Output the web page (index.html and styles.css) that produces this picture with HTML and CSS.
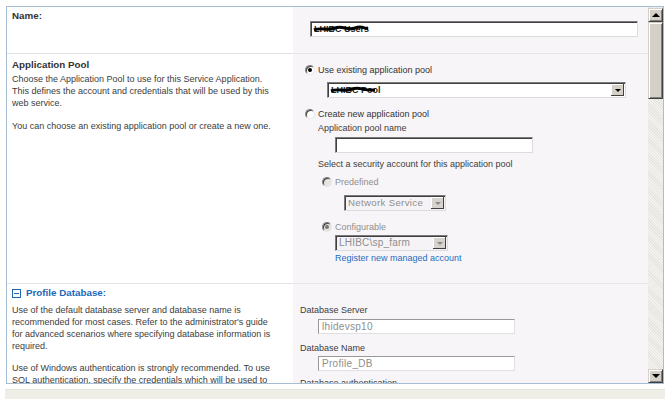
FILE: index.html
```html
<!DOCTYPE html>
<html>
<head>
<meta charset="utf-8">
<link rel="stylesheet" href="styles.css">
</head>
<body>
<div class="window">
  <div class="content">
    <div class="row row-name">
      <div class="left">
        <div class="title">Name:</div>
      </div>
      <div class="right">
        <div class="field field-name redacted">
          <span class="val">LHIBC Users</span>
          <svg class="scribble" width="56" height="8" viewBox="0 0 56 8"><path d="M1 5 C8 2 14 6 22 3 S34 6 42 3 S50 4 55 3" stroke="#000" stroke-width="3" fill="none"/></svg>
        </div>
      </div>
    </div>

    <div class="row row-pool">
      <div class="left">
        <div class="title">Application Pool</div>
        <p class="desc">Choose the Application Pool to use for this Service Application.<br>This defines the account and credentials that will be used by this<br>web service.</p>
        <p class="desc gap">You can choose an existing application pool or create a new one.</p>
      </div>
      <div class="right">
        <div class="opt opt-first"><span class="radio checked"></span><span>Use existing application pool</span></div>
        <div class="select select-pool redacted">
          <span class="val">LHIBC Pool</span>
          <svg class="scribble" width="46" height="8" viewBox="0 0 46 8"><path d="M1 5 C8 2 14 6 22 3 S32 5 45 4" stroke="#000" stroke-width="3" fill="none"/></svg>
          <span class="drop"><span class="tri"></span></span>
        </div>
        <div class="opt opt-second"><span class="radio"></span><span>Create new application pool</span></div>
        <div class="sub">
          <div class="lbl">Application pool name</div>
          <div class="field field-poolname"></div>
          <div class="lbl lbl-sec">Select a security account for this application pool</div>
          <div class="subsub">
            <div class="opt opt-dis opt-pre"><span class="radio dis"></span><span>Predefined</span></div>
            <div class="select select-dis select-net"><span class="val">Network Service</span><span class="drop"><span class="tri"></span></span></div>
            <div class="opt opt-dis opt-conf"><span class="radio dis checked"></span><span>Configurable</span></div>
          </div>
          <div class="select select-dis select-farm"><span class="val">LHIBC\sp_farm</span><span class="drop"><span class="tri"></span></span></div>
          <a class="link">Register new managed account</a>
        </div>
      </div>
    </div>

    <div class="row row-db">
      <div class="left">
        <div class="title title-db"><span class="minus"></span>Profile Database:</div>
        <p class="desc desc-db">Use of the default database server and database name is<br>recommended for most cases. Refer to the administrator's guide<br>for advanced scenarios where specifying database information is<br>required.</p>
        <p class="desc gap-db">Use of Windows authentication is strongly recommended. To use<br>SQL authentication, specify the credentials which will be used to<br>connect to the database.</p>
      </div>
      <div class="right">
        <div class="lbl lbl-server">Database Server</div>
        <div class="field field-db"><span class="val dim">lhidevsp10</span></div>
        <div class="lbl lbl-dbname">Database Name</div>
        <div class="field field-db field-db2"><span class="val dim">Profile_DB</span></div>
        <div class="lbl lbl-auth">Database authentication</div>
      </div>
    </div>
  </div>
  <div class="scrollbar">
    <div class="sbtn"><span class="up"></span></div>
    <div class="thumb"></div>
    <div class="track"></div>
    <div class="sbtn"><span class="down"></span></div>
  </div>
</div>
<div class="bottombar"></div>
</body>
</html>
```
FILE: styles.css
```css
html, body {
  margin: 0;
  padding: 0;
  background: #ffffff;
  font-family: "Liberation Sans", Arial, sans-serif;
  font-size: 9px;
  color: #333333;
}
.window {
  margin: 6px 0 0 6px;
  width: 656px;
  height: 376px;
  border: 1px solid #a7bdd3;
  display: flex;
  overflow: hidden;
}
.content {
  width: 641px;
  height: 376px;
  overflow: hidden;
}
.row {
  display: flex;
}
.row .left {
  width: 281px;
  padding-left: 5px;
  background: #ffffff;
  border-bottom: 1px solid #e4e2e4;
  white-space: nowrap;
}
.row .right {
  width: 355px;
  flex: 0 0 355px;
  background: #f8f5f8;
  border-bottom: 1px solid #e9e6e9;
  position: relative;
  white-space: nowrap;
}
.row-name { height: 47px; }
.row-pool { height: 230px; }
.row-db { height: 200px; }
.row-db .left, .row-db .right { border-bottom: none; }

.title {
  font-weight: bold;
  font-size: 9.8px;
  line-height: 14px;
  color: #333;
}
.row-name .title { margin-top: 2px; }
.row-pool .title { margin-top: 4px; }
.desc {
  margin: 1px 0 0 0;
  line-height: 12px;
  color: #3c3c3c;
}
.desc.gap { margin-top: 11px; }
.title-db {
  margin-top: 2px;
  color: #1b68b8;
  font-size: 9.8px;
  display: flex;
  align-items: center;
}
.minus {
  width: 7px;
  height: 7px;
  border: 1px solid #1b68b8;
  margin-right: 5px;
  position: relative;
}
.minus::after {
  content: "";
  position: absolute;
  left: 1px;
  right: 1px;
  top: 3px;
  height: 1px;
  background: #1b68b8;
}
.desc-db { margin-top: 4px; }
.gap-db { margin-top: 10px; }

/* fields */
.field, .select {
  background: #fff;
  border-top: 1px solid #7b7b7b;
  border-left: 1px solid #7b7b7b;
  border-right: 1px solid #dcdcdc;
  border-bottom: 1px solid #dcdcdc;
  box-shadow: inset 1px 1px 0 #404040;
  box-sizing: border-box;
  position: relative;
  display: flex;
  align-items: center;
  line-height: 12px;
}
.val {
  padding-left: 3px;
  white-space: nowrap;
}
.redacted .val { color: #222; font-weight: bold; }
.scribble {
  position: absolute;
  left: 2px;
  top: 3px;
}
.field-name {
  margin: 14px 0 0 17px;
  width: 328px;
  height: 16px;
}
.opt {
  display: flex;
  align-items: center;
  line-height: 14px;
  height: 14px;
}
.opt-first { margin: 9px 0 0 12px; }
.opt-second { margin: 9px 0 0 12px; }
.radio {
  width: 10px;
  height: 10px;
  border-radius: 50%;
  background: #fff;
  border: 1px solid;
  border-color: #808080 #e8e8e8 #e8e8e8 #808080;
  box-sizing: border-box;
  margin-right: 3px;
  position: relative;
  box-shadow: inset 1px 1px 0 #404040;
}
.radio.checked::after {
  content: "";
  position: absolute;
  width: 4px;
  height: 4px;
  border-radius: 50%;
  background: #000;
  left: 2px;
  top: 2px;
}
.radio.dis {
  background: #e6e4e0;
}
.radio.dis.checked::after { background: #777; }
.select-pool {
  margin: 5px 0 0 34px;
  width: 299px;
  height: 16px;
}
.drop {
  position: absolute;
  right: 1px;
  top: 1px;
  bottom: 1px;
  width: 13px;
  background: #d4d0c8;
  box-shadow: inset -1px -1px 0 #404040, inset 1px 1px 0 #ffffff;
  display: flex;
  align-items: center;
  justify-content: center;
}
.tri {
  width: 0;
  height: 0;
  border-left: 3px solid transparent;
  border-right: 3px solid transparent;
  border-top: 3px solid #000;
  margin-top: 1px;
}
.select-dis .tri { border-top-color: #8a8a8a; }
.select-dis .drop { background: #d6d3ce; }
.sub { margin-left: 25px; }
.lbl {
  line-height: 14px;
  height: 14px;
  color: #3c3c3c;
}
.field-poolname {
  margin: 2px 0 0 17px;
  width: 198px;
  height: 16px;
}
.lbl-sec { margin-top: 4px; }
.subsub { margin-left: 4px; }
.opt-dis { color: #8e8e8e; }
.opt-pre { margin-top: 4px; }
.select-net {
  margin: 6px 0 0 22px;
  width: 102px;
  height: 16px;
  background: #f5f3f5;
  font-size: 9.6px;
  color: #8e8e8e;
  letter-spacing: 0.35px;
}
.opt-conf { margin-top: 9px; }
.select-farm {
  margin: 1px 0 0 17px;
  width: 113px;
  height: 16px;
  background: #f5f3f5;
  font-size: 10px;
  color: #8e8e8e;
  letter-spacing: 0.2px;
}
.link {
  display: block;
  margin-left: 17px;
  line-height: 14px;
  color: #1f6cbf;
}
.lbl-server { margin: 19px 0 0 7px; }
.field-db {
  margin: 2px 0 0 25px;
  width: 197px;
  height: 15px;
  border-color: #999 #e0e0e0 #e0e0e0 #999;
  box-shadow: none;
}
.dim { color: #8e8e8e; font-size: 10px; letter-spacing: 0.3px; }
.lbl-dbname { margin: 7px 0 0 7px; }
.field-db2 { margin-top: 1px; }
.lbl-auth { margin: 5px 0 0 7px; }

/* scrollbar */
.scrollbar {
  width: 15px;
  height: 376px;
  display: flex;
  flex-direction: column;
  background-color: #efeeea;
  background-image: repeating-linear-gradient(45deg, #f3f2ee 0 1px, #e6e5e0 1px 2px);
}
.sbtn, .thumb {
  background: #d4d0c8;
  box-sizing: border-box;
  border-top: 1px solid #d4d0c8;
  border-left: 1px solid #d4d0c8;
  border-right: 1px solid #404040;
  border-bottom: 1px solid #404040;
  box-shadow: inset 1px 1px 0 #ffffff, inset -1px -1px 0 #808080;
}
.sbtn {
  height: 14px;
  display: flex;
  align-items: center;
  justify-content: center;
}
.sbtn:first-child { margin-top: 1px; }
.thumb { height: 77px; }
.track { flex: 1; }
.up, .down {
  width: 0;
  height: 0;
  border-left: 4px solid transparent;
  border-right: 4px solid transparent;
}
.up { border-bottom: 4px solid #000; }
.down { border-top: 4px solid #000; }
.bottombar {
  margin: 5px 0 0 5px;
  width: 660px;
  height: 9px;
  background: #efefe8;
  border-top: 1px solid #e4e4dc;
}
```
